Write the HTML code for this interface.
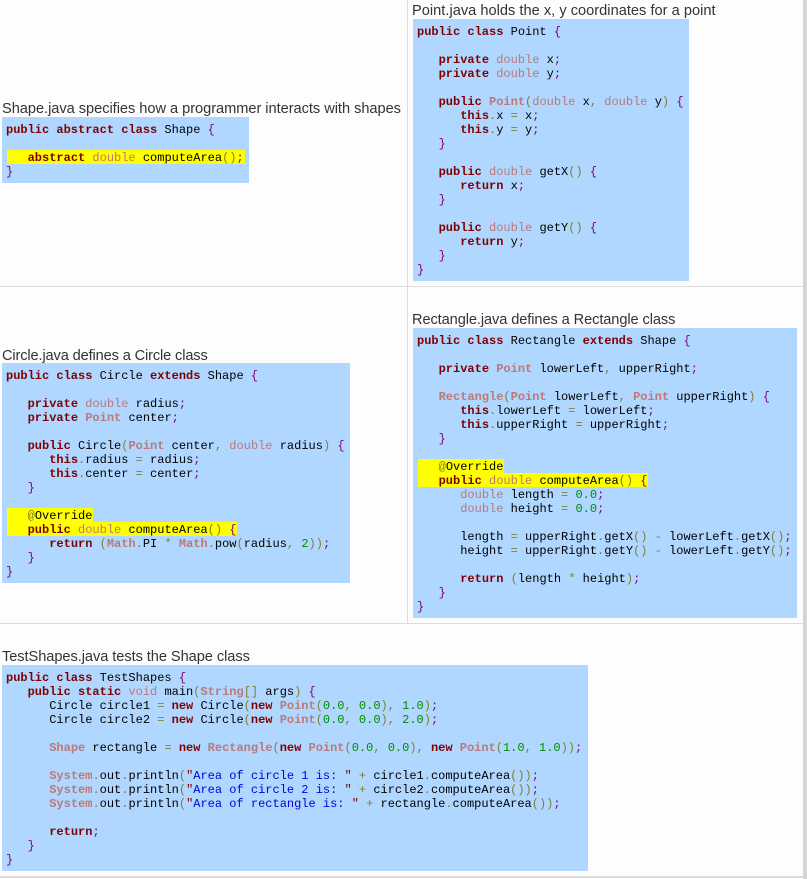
<!DOCTYPE html>
<html>
<head>
<meta charset="utf-8">
<style>
html,body{margin:0;padding:0;background:#fdfdfd;}
body{position:relative;width:807px;height:879px;overflow:hidden;}
.l{position:absolute;background:#dcdcdc;}
.h{position:absolute;font:14.6px/18px "Liberation Sans",sans-serif;color:#333;white-space:nowrap;}
.c{position:absolute;background:#b0d7ff;}
.y{position:absolute;background:#ffff00;height:14px;}
pre{position:absolute;margin:0;font:12px/14px "Liberation Mono",monospace;color:#000;white-space:pre;}
i{font-style:normal;}
.k{color:#800000;font-weight:bold;}
.t{color:#bb7977;}
.T{color:#bb7977;font-weight:bold;}
.p{color:#808030;}
.b{color:#800080;}
.n{color:#008c00;}
.s{color:#0000e6;}
.q{color:#800000;}
</style>
</head>
<body>
<div class="l" style="left:0;top:286px;width:803px;height:1px"></div>
<div class="l" style="left:0;top:623px;width:803px;height:1px"></div>
<div class="l" style="left:0;top:876px;width:803px;height:2px"></div>
<div class="l" style="left:407px;top:0;width:1px;height:623px"></div>
<div class="l" style="left:803px;top:0;width:4px;height:879px;background:#d4d4d4"></div>

<div class="h" style="left:2px;top:100px;letter-spacing:-.03px">Shape.java specifies how a programmer interacts with shapes</div>
<div class="c" style="left:2px;top:117px;width:247px;height:66px"></div>
<div class="y" style="left:7px;top:150px;width:238px"></div>
<pre style="left:6px;top:123px"><i class="k">public abstract class</i> Shape <i class="b">{</i>

   <i class="k">abstract</i> <i class="t">double</i> computeArea<i class="p">()</i><i class="b">;</i>
<i class="b">}</i></pre>

<div class="h" style="left:412px;top:2px;letter-spacing:.02px">Point.java holds the x, y coordinates for a point</div>
<div class="c" style="left:413px;top:19px;width:276px;height:262px"></div>
<pre style="left:417px;top:25px"><i class="k">public class</i> Point <i class="b">{</i>

   <i class="k">private</i> <i class="t">double</i> x<i class="b">;</i>
   <i class="k">private</i> <i class="t">double</i> y<i class="b">;</i>

   <i class="k">public</i> <i class="T">Point</i><i class="p">(</i><i class="t">double</i> x<i class="p">,</i> <i class="t">double</i> y<i class="p">)</i> <i class="b">{</i>
      <i class="k">this</i><i class="p">.</i>x <i class="p">=</i> x<i class="b">;</i>
      <i class="k">this</i><i class="p">.</i>y <i class="p">=</i> y<i class="b">;</i>
   <i class="b">}</i>

   <i class="k">public</i> <i class="t">double</i> getX<i class="p">()</i> <i class="b">{</i>
      <i class="k">return</i> x<i class="b">;</i>
   <i class="b">}</i>

   <i class="k">public</i> <i class="t">double</i> getY<i class="p">()</i> <i class="b">{</i>
      <i class="k">return</i> y<i class="b">;</i>
   <i class="b">}</i>
<i class="b">}</i></pre>

<div class="h" style="left:2px;top:347px;letter-spacing:-.13px">Circle.java defines a Circle class</div>
<div class="c" style="left:2px;top:363px;width:348px;height:220px"></div>
<div class="y" style="left:7px;top:508px;width:86px"></div>
<div class="y" style="left:7px;top:522px;width:230px"></div>
<pre style="left:6px;top:369px"><i class="k">public class</i> Circle <i class="k">extends</i> Shape <i class="b">{</i>

   <i class="k">private</i> <i class="t">double</i> radius<i class="b">;</i>
   <i class="k">private</i> <i class="T">Point</i> center<i class="b">;</i>

   <i class="k">public</i> Circle<i class="p">(</i><i class="T">Point</i> center<i class="p">,</i> <i class="t">double</i> radius<i class="p">)</i> <i class="b">{</i>
      <i class="k">this</i><i class="p">.</i>radius <i class="p">=</i> radius<i class="b">;</i>
      <i class="k">this</i><i class="p">.</i>center <i class="p">=</i> center<i class="b">;</i>
   <i class="b">}</i>

   <i class="p">@</i>Override
   <i class="k">public</i> <i class="t">double</i> computeArea<i class="p">()</i> <i class="b">{</i>
      <i class="k">return</i> <i class="p">(</i><i class="T">Math</i><i class="p">.</i>PI <i class="p">*</i> <i class="T">Math</i><i class="p">.</i>pow<i class="p">(</i>radius<i class="p">,</i> <i class="n">2</i><i class="p">))</i><i class="b">;</i>
   <i class="b">}</i>
<i class="b">}</i></pre>

<div class="h" style="left:412px;top:311px;letter-spacing:-.09px">Rectangle.java defines a Rectangle class</div>
<div class="c" style="left:413px;top:328px;width:384px;height:290px"></div>
<div class="y" style="left:418px;top:459px;width:86px"></div>
<div class="y" style="left:418px;top:473px;width:230px"></div>
<pre style="left:417px;top:334px"><i class="k">public class</i> Rectangle <i class="k">extends</i> Shape <i class="b">{</i>

   <i class="k">private</i> <i class="T">Point</i> lowerLeft<i class="p">,</i> upperRight<i class="b">;</i>

   <i class="T">Rectangle</i><i class="p">(</i><i class="T">Point</i> lowerLeft<i class="p">,</i> <i class="T">Point</i> upperRight<i class="p">)</i> <i class="b">{</i>
      <i class="k">this</i><i class="p">.</i>lowerLeft <i class="p">=</i> lowerLeft<i class="b">;</i>
      <i class="k">this</i><i class="p">.</i>upperRight <i class="p">=</i> upperRight<i class="b">;</i>
   <i class="b">}</i>

   <i class="p">@</i>Override
   <i class="k">public</i> <i class="t">double</i> computeArea<i class="p">()</i> <i class="b">{</i>
      <i class="t">double</i> length <i class="p">=</i> <i class="n">0.0</i><i class="b">;</i>
      <i class="t">double</i> height <i class="p">=</i> <i class="n">0.0</i><i class="b">;</i>

      length <i class="p">=</i> upperRight<i class="p">.</i>getX<i class="p">()</i> <i class="p">-</i> lowerLeft<i class="p">.</i>getX<i class="p">()</i><i class="b">;</i>
      height <i class="p">=</i> upperRight<i class="p">.</i>getY<i class="p">()</i> <i class="p">-</i> lowerLeft<i class="p">.</i>getY<i class="p">()</i><i class="b">;</i>

      <i class="k">return</i> <i class="p">(</i>length <i class="p">*</i> height<i class="p">)</i><i class="b">;</i>
   <i class="b">}</i>
<i class="b">}</i></pre>

<div class="h" style="left:2px;top:648px;letter-spacing:-.055px">TestShapes.java tests the Shape class</div>
<div class="c" style="left:2px;top:665px;width:586px;height:206px"></div>
<pre style="left:6px;top:671px"><i class="k">public class</i> TestShapes <i class="b">{</i>
   <i class="k">public static</i> <i class="t">void</i> main<i class="p">(</i><i class="T">String</i><i class="p">[]</i> args<i class="p">)</i> <i class="b">{</i>
      Circle circle1 <i class="p">=</i> <i class="k">new</i> Circle<i class="p">(</i><i class="k">new</i> <i class="T">Point</i><i class="p">(</i><i class="n">0.0</i><i class="p">,</i> <i class="n">0.0</i><i class="p">),</i> <i class="n">1.0</i><i class="p">)</i><i class="b">;</i>
      Circle circle2 <i class="p">=</i> <i class="k">new</i> Circle<i class="p">(</i><i class="k">new</i> <i class="T">Point</i><i class="p">(</i><i class="n">0.0</i><i class="p">,</i> <i class="n">0.0</i><i class="p">),</i> <i class="n">2.0</i><i class="p">)</i><i class="b">;</i>

      <i class="T">Shape</i> rectangle <i class="p">=</i> <i class="k">new</i> <i class="T">Rectangle</i><i class="p">(</i><i class="k">new</i> <i class="T">Point</i><i class="p">(</i><i class="n">0.0</i><i class="p">,</i> <i class="n">0.0</i><i class="p">),</i> <i class="k">new</i> <i class="T">Point</i><i class="p">(</i><i class="n">1.0</i><i class="p">,</i> <i class="n">1.0</i><i class="p">))</i><i class="b">;</i>

      <i class="T">System</i><i class="p">.</i>out<i class="p">.</i>println<i class="p">(</i><i class="q">"</i><i class="s">Area of circle 1 is: </i><i class="q">"</i> <i class="p">+</i> circle1<i class="p">.</i>computeArea<i class="p">())</i><i class="b">;</i>
      <i class="T">System</i><i class="p">.</i>out<i class="p">.</i>println<i class="p">(</i><i class="q">"</i><i class="s">Area of circle 2 is: </i><i class="q">"</i> <i class="p">+</i> circle2<i class="p">.</i>computeArea<i class="p">())</i><i class="b">;</i>
      <i class="T">System</i><i class="p">.</i>out<i class="p">.</i>println<i class="p">(</i><i class="q">"</i><i class="s">Area of rectangle is: </i><i class="q">"</i> <i class="p">+</i> rectangle<i class="p">.</i>computeArea<i class="p">())</i><i class="b">;</i>

      <i class="k">return</i><i class="b">;</i>
   <i class="b">}</i>
<i class="b">}</i></pre>
</body>
</html>
